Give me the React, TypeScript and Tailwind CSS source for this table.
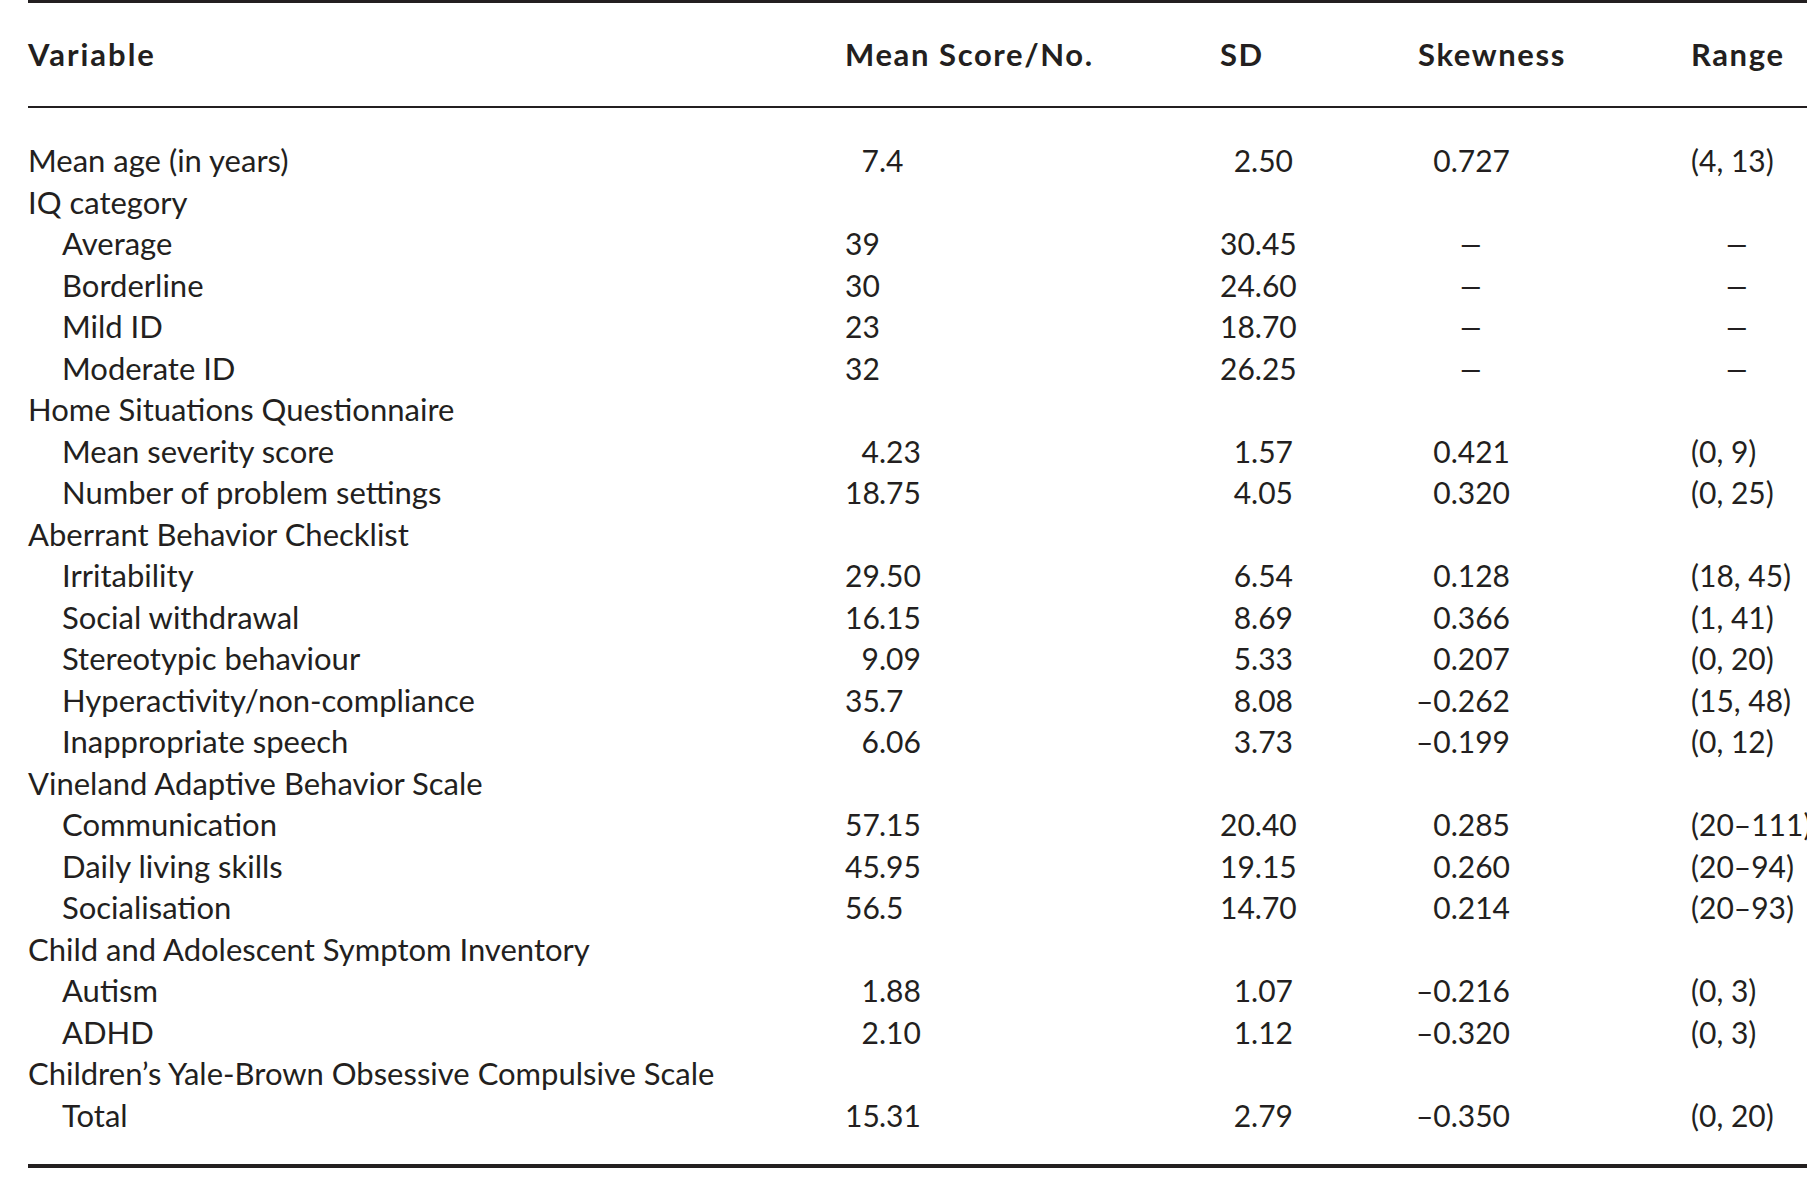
import React from "react";

type Row = {
  label: string;
  indent?: boolean;
  mean?: string;
  sd?: string;
  skew?: string;
  range?: string;
};

const rows: Row[] = [
  { label: "Mean age (in years)", mean: "7.4", sd: "2.50", skew: "0.727", range: "(4, 13)" },
  { label: "IQ category" },
  { label: "Average", indent: true, mean: "39", sd: "30.45", skew: "–", range: "–" },
  { label: "Borderline", indent: true, mean: "30", sd: "24.60", skew: "–", range: "–" },
  { label: "Mild ID", indent: true, mean: "23", sd: "18.70", skew: "–", range: "–" },
  { label: "Moderate ID", indent: true, mean: "32", sd: "26.25", skew: "–", range: "–" },
  { label: "Home Situations Questionnaire" },
  { label: "Mean severity score", indent: true, mean: "4.23", sd: "1.57", skew: "0.421", range: "(0, 9)" },
  { label: "Number of problem settings", indent: true, mean: "18.75", sd: "4.05", skew: "0.320", range: "(0, 25)" },
  { label: "Aberrant Behavior Checklist" },
  { label: "Irritability", indent: true, mean: "29.50", sd: "6.54", skew: "0.128", range: "(18, 45)" },
  { label: "Social withdrawal", indent: true, mean: "16.15", sd: "8.69", skew: "0.366", range: "(1, 41)" },
  { label: "Stereotypic behaviour", indent: true, mean: "9.09", sd: "5.33", skew: "0.207", range: "(0, 20)" },
  { label: "Hyperactivity/non-compliance", indent: true, mean: "35.7", sd: "8.08", skew: "–0.262", range: "(15, 48)" },
  { label: "Inappropriate speech", indent: true, mean: "6.06", sd: "3.73", skew: "–0.199", range: "(0, 12)" },
  { label: "Vineland Adaptive Behavior Scale" },
  { label: "Communication", indent: true, mean: "57.15", sd: "20.40", skew: "0.285", range: "(20–111)" },
  { label: "Daily living skills", indent: true, mean: "45.95", sd: "19.15", skew: "0.260", range: "(20–94)" },
  { label: "Socialisation", indent: true, mean: "56.5", sd: "14.70", skew: "0.214", range: "(20–93)" },
  { label: "Child and Adolescent Symptom Inventory" },
  { label: "Autism", indent: true, mean: "1.88", sd: "1.07", skew: "–0.216", range: "(0, 3)" },
  { label: "ADHD", indent: true, mean: "2.10", sd: "1.12", skew: "–0.320", range: "(0, 3)" },
  { label: "Children’s Yale-Brown Obsessive Compulsive Scale" },
  { label: "Total", indent: true, mean: "15.31", sd: "2.79", skew: "–0.350", range: "(0, 20)" },
];

function Mean({ value }: { value?: string }) {
  if (!value) return null;
  const idx = value.indexOf(".");
  const intPart = idx === -1 ? value : value.slice(0, idx);
  const frac = idx === -1 ? "" : value.slice(idx);
  return (
    <span className="flex">
      <span className="w-[34px] text-right">{intPart}</span>
      <span>{frac}</span>
    </span>
  );
}

function Dash() {
  return <span className="inline-block scale-x-150">–</span>;
}

export default function App() {
  return (
    <div
      className="w-[1807px] h-[1178px] overflow-hidden bg-white text-[#231f20] tabular-nums"
      style={{ fontFamily: "Lato, 'Open Sans', sans-serif" }}
    >
      <div className="ml-[28px] h-[3px] bg-[#231f20]" />
      <div className="grid grid-cols-[817px_375px_73px_217px_1fr] items-center h-[103px] pl-[28px] text-[31px] font-bold tracking-[1.6px] whitespace-nowrap">
        <div className="tracking-[2px]">Variable</div>
        <div>Mean Score/No.</div>
        <div>SD</div>
        <div className="pl-[125px]">Skewness</div>
        <div className="pl-[181px]">Range</div>
      </div>
      <div className="ml-[28px] h-[2px] bg-[#231f20]" />
      <div className="pt-[32px] pl-[28px] text-[30px] leading-[41.5px] whitespace-nowrap">
        {rows.map((r, i) => (
          <div key={i} className="grid grid-cols-[817px_375px_73px_217px_1fr] h-[41.5px]">
            <div className={r.indent ? "pl-[34px] text-[31px]" : "text-[31px]"}>{r.label}</div>
            <div>
              <Mean value={r.mean} />
            </div>
            <div className="text-right">{r.sd}</div>
            <div className={r.skew === "–" ? "text-right pr-[31px]" : "text-right"}>
              {r.skew === "–" ? <Dash /> : r.skew}
            </div>
            <div className={r.range === "–" ? "pl-[218px]" : "pl-[181px]"}>
              {r.range === "–" ? <Dash /> : r.range}
            </div>
          </div>
        ))}
      </div>
      <div className="mt-[28px] ml-[28px] h-[4px] bg-[#231f20]" />
    </div>
  );
}
